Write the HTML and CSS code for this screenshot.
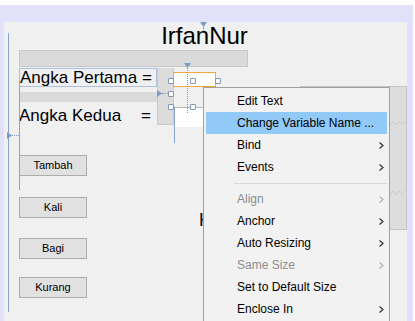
FILE: index.html
```html
<!DOCTYPE html>
<html>
	<head>
		<meta charset="utf-8">
		<title>Form designer</title>
		<link rel="stylesheet" href="styles.css">
	</head>
	<body>
		<div class="frame">
			<div class="panel">
				<div class="title">IrfanNur</div>
				<div class="form">
					<div class="bar"></div>
					<div class="inputs-row">
						<div class="labels">
							<div class="label label-first"><span class="name">Angka Pertama</span><span>=</span></div>
							<div class="spacer"></div>
							<div class="label label-second"><span class="name">Angka Kedua</span><span>=</span></div>
						</div>
						<div class="gap-col"></div>
						<div class="fields">
							<div class="field field-selected"></div>
							<div class="field field-second"></div>
						</div>
					</div>
					<div class="buttons">
						<div class="btn">Tambah</div>
						<div class="btn btn-kali">Kali</div>
						<div class="btn btn-bagi">Bagi</div>
						<div class="btn btn-kurang">Kurang</div>
					</div>
				</div>

				<!-- widgets that sit free on the design canvas -->
				<div class="side-box">
					<svg class="zigzag zig-top" width="17" height="6" viewBox="0 0 17 6"><polyline points="0,5 3,1 6,5 9,1 12,5 15,1 17,4" fill="none" stroke="#cdcdcd" stroke-width="1"/></svg>
					<svg class="zigzag zig-bottom" width="17" height="6" viewBox="0 0 17 6"><polyline points="0,5 3,1 6,5 9,1 12,5 15,1 17,4" fill="none" stroke="#cdcdcd" stroke-width="1"/></svg>
				</div>
				<div class="result">H</div>

				<!-- designer guides and anchors -->
				<div class="guide guide-edge"></div>
				<div class="guide guide-label"></div>
				<div class="guide guide-field"></div>
				<svg class="anchor anchor-top" width="7" height="5" viewBox="0 0 7 5"><polygon points="0,0 7,0 3.5,5" fill="#7d9cc4"/></svg>
				<div class="dots dots-top"></div>
				<svg class="anchor anchor-field" width="7" height="5" viewBox="0 0 7 5"><polygon points="0,0 7,0 3.5,5" fill="#7d9cc4"/></svg>
				<div class="dots dots-field"></div>
				<svg class="anchor anchor-eq" width="5" height="7" viewBox="0 0 5 7"><polygon points="0,0 5,3.5 0,7" fill="#7d9cc4"/></svg>
				<div class="dots dots-eq"></div>
				<svg class="anchor anchor-left" width="5" height="7" viewBox="0 0 5 7"><polygon points="0,0 5,3.5 0,7" fill="#7d9cc4"/></svg>
				<div class="dots dots-left"></div>

				<div class="handle h1"></div>
				<div class="handle h2"></div>
				<div class="handle h3"></div>
				<div class="handle h4"></div>
				<div class="handle h5"></div>
				<div class="handle h6"></div>
				<div class="handle h7"></div>
			</div>
		</div>

		<div class="menu">
			<div class="item"><span>Edit Text</span></div>
			<div class="item active"><span>Change Variable Name ...</span></div>
			<div class="item"><span>Bind</span><svg class="arrow" width="5" height="7" viewBox="0 0 5 7"><polyline points="0.5,0.5 4,3.5 0.5,6.5" fill="none" stroke="#333" stroke-width="1.2"/></svg></div>
			<div class="item"><span>Events</span><svg class="arrow" width="5" height="7" viewBox="0 0 5 7"><polyline points="0.5,0.5 4,3.5 0.5,6.5" fill="none" stroke="#333" stroke-width="1.2"/></svg></div>
			<div class="separator"></div>
			<div class="item disabled"><span>Align</span><svg class="arrow" width="5" height="7" viewBox="0 0 5 7"><polyline points="0.5,0.5 4,3.5 0.5,6.5" fill="none" stroke="#b4b4b4" stroke-width="1.2"/></svg></div>
			<div class="item"><span>Anchor</span><svg class="arrow" width="5" height="7" viewBox="0 0 5 7"><polyline points="0.5,0.5 4,3.5 0.5,6.5" fill="none" stroke="#333" stroke-width="1.2"/></svg></div>
			<div class="item"><span>Auto Resizing</span><svg class="arrow" width="5" height="7" viewBox="0 0 5 7"><polyline points="0.5,0.5 4,3.5 0.5,6.5" fill="none" stroke="#333" stroke-width="1.2"/></svg></div>
			<div class="item disabled"><span>Same Size</span><svg class="arrow" width="5" height="7" viewBox="0 0 5 7"><polyline points="0.5,0.5 4,3.5 0.5,6.5" fill="none" stroke="#b4b4b4" stroke-width="1.2"/></svg></div>
			<div class="item"><span>Set to Default Size</span></div>
			<div class="item"><span>Enclose In</span><svg class="arrow" width="5" height="7" viewBox="0 0 5 7"><polyline points="0.5,0.5 4,3.5 0.5,6.5" fill="none" stroke="#333" stroke-width="1.2"/></svg></div>
		</div>
	</body>
</html>
```

FILE: styles.css
```css
html, body { margin:0; height:321px; overflow:hidden; background:#fff; }
body { position:relative; font-family:"Liberation Sans", Arial, sans-serif; color:#000; }

.frame { margin-top:5px; width:413px; box-sizing:border-box; padding:4px 6px 6px 4px; background:#e1e1f9; }
.panel { position:relative; height:299px; background:#f0f0f0; }

.title { margin-top:13px; padding-right:2px; height:28px; line-height:28px; font-size:24px; text-align:center; }

.form { padding-left:15px; }
.bar { width:229px; height:17px; box-sizing:border-box; background:#dadada; border:1px solid #c8c8c8; }

.inputs-row { display:flex; height:59px; margin-top:1px; }
.labels { width:138px; }
.label { font-size:17px; line-height:17px; white-space:nowrap; }
.label .name { display:inline-block; width:122px; }
.label-first { height:19px; box-sizing:border-box; border:1px solid #a9c0de; }
.label-second { height:23px; box-sizing:border-box; padding-top:4px; margin-top:1px; }
.spacer { height:10px; margin-top:5px; background:#dadada; }
.gap-col { width:17px; height:57px; box-sizing:border-box; background:#dcdcdc; border:1px solid #cacaca; border-top:none; }
.fields { display:flex; flex-direction:column; }
.field { background:#fff; box-sizing:border-box; }
.field-selected { width:43px; height:15px; margin:4px 0 0 -1px; border:1px solid #f2a83a; }
.field-second { width:60px; height:20px; margin-top:20px; border-top:1px solid #b9b9b9; border-left:1px solid #94b2d8; }

.buttons { display:flex; flex-direction:column; margin-top:28px; }
.btn { width:68px; height:21px; box-sizing:border-box; background:#e1e1e1; border:1px solid #adadad; font-size:11px; line-height:19px; text-align:center; }
.btn-kali { margin-top:21px; }
.btn-bagi { margin-top:20px; }
.btn-kurang { margin-top:18px; }

.side-box { position:absolute; left:296px; top:64px; width:107px; height:144px; box-sizing:border-box; background:#dddddd; border:1px solid #c4c4c4; }
.zigzag { position:absolute; left:89px; }
.zig-top { top:33px; }
.zig-bottom { top:103px; }
.result { position:absolute; left:195px; top:189px; font-size:18px; line-height:18px; }

.guide { position:absolute; width:1px; background:#86a4d4; }
.guide-edge { left:4px; top:11px; height:279px; }
.guide-label { left:15px; top:59px; height:109px; }
.guide-field { left:170px; top:85px; height:36px; }

.anchor { position:absolute; }
.anchor-top { left:196px; top:0; }
.anchor-field { left:180px; top:41px; }
.anchor-eq { left:153px; top:68px; }
.anchor-left { left:3px; top:110px; }
.dots { position:absolute; border:0 dotted #7d9cc4; }
.dots-top { left:199px; top:5px; height:4px; border-left-width:1px; }
.dots-field { left:183px; top:46px; height:45px; border-left-width:1px; }
.dots-eq { left:158px; top:71px; width:10px; border-top-width:1px; }
.dots-left { left:8px; top:113px; width:7px; border-top-width:1px; }

.handle { position:absolute; width:6px; height:6px; box-sizing:border-box; background:#fff; border:1px solid #8197b8; border-radius:1px; }
.h1 { left:164px; top:56px; }
.h2 { left:186px; top:56px; }
.h3 { left:211px; top:56px; }
.h4 { left:164px; top:69px; }
.h5 { left:211px; top:69px; }
.h6 { left:164px; top:82px; }
.h7 { left:186px; top:82px; }

.menu { position:absolute; left:203px; top:87px; width:187px; box-sizing:border-box; padding:2px; background:#f2f2f2; border:1px solid #a0a0a0; font-size:12px; }
.item { display:flex; justify-content:space-between; align-items:center; height:22px; padding:0 3px 0 31px; white-space:nowrap; }
.item.active { background:#91c9f7; }
.item.disabled { color:#8d8d8d; }
.separator { height:1px; margin:5px 0 4px 28px; background:#d7d7d7; }
```
